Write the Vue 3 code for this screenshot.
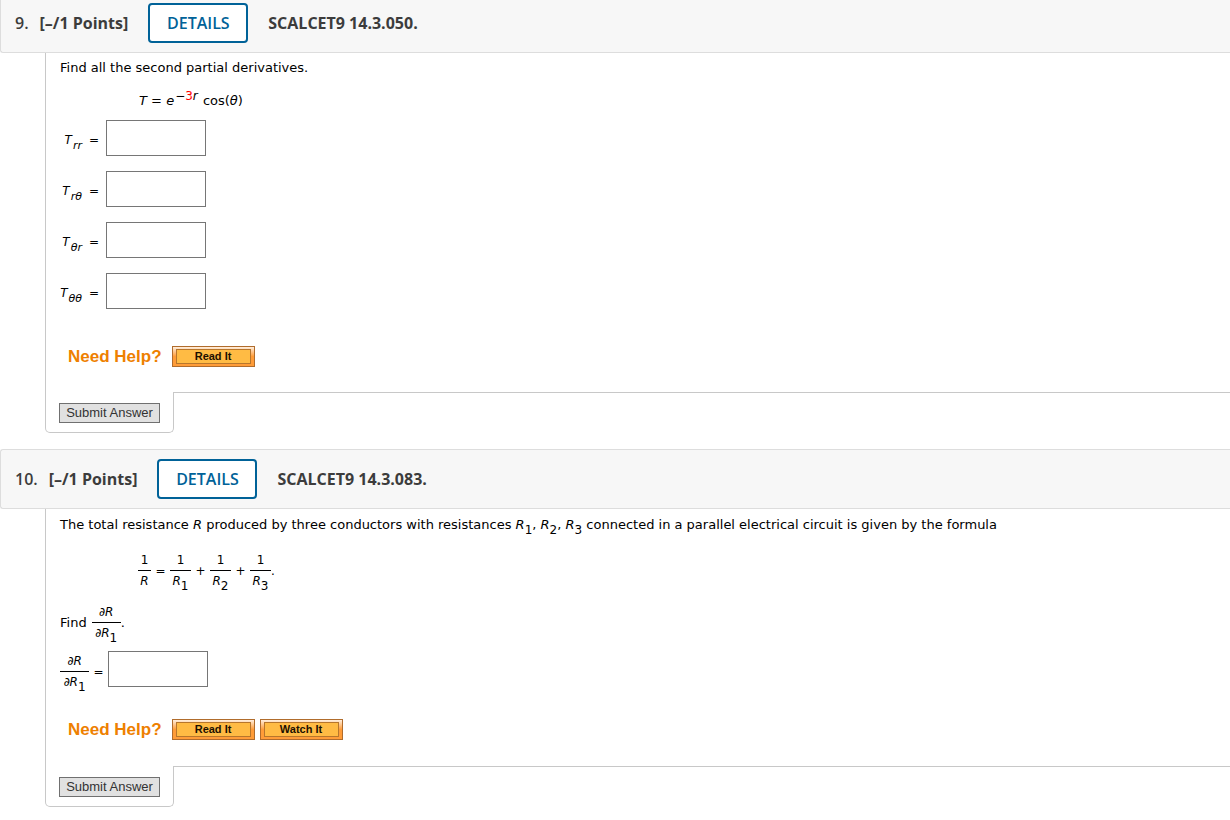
<template>
  <main class="assignment">
    <section v-for="q in questions" :key="q.number" class="question">
      <header class="question-header">
        <span class="number">{{ q.number }}.</span>
        <span class="points">[–/1 Points]</span>
        <button type="button" class="details">DETAILS</button>
        <span class="code">{{ q.code }}</span>
      </header>

      <div class="question-body">
        <div v-if="q.number === 9" class="content">
          <p class="text">Find all the second partial derivatives.</p>
          <p class="text equation">
            <i>T</i> = <i>e</i><sup>−<span class="red">3</span><i>r</i></sup> cos(<i>θ</i>)
          </p>
          <div v-for="sub in partials" :key="sub" class="answer-row">
            <label :for="'t-' + sub"><i>T</i><sub><i>{{ sub }}</i></sub><span class="eq">=</span></label>
            <input :id="'t-' + sub" v-model="answers[sub]" type="text" class="answer" />
          </div>
        </div>

        <div v-else class="content">
          <p class="text">
            The total resistance <i>R</i> produced by three conductors with resistances
            <i>R</i><sub>1</sub>, <i>R</i><sub>2</sub>, <i>R</i><sub>3</sub> connected in a parallel electrical circuit is given by the formula
          </p>
          <div class="formula">
            <span class="frac narrow"><span>1</span><span class="den"><i>R</i></span></span>
            <span class="op">=</span>
            <template v-for="n in 3" :key="n">
              <span v-if="n > 1" class="op">+</span>
              <span class="frac"><span>1</span><span class="den"><i>R</i><sub>{{ n }}</sub></span></span>
            </template>
            <span>.</span>
          </div>
          <div class="find">
            <span class="find-word">Find</span>
            <span class="frac wide"><span>∂<i>R</i></span><span class="den">∂<i>R</i><sub>1</sub></span></span>
            <span>.</span>
          </div>
          <div class="derivative">
            <label for="dr" class="derivative-label">
              <span class="frac wide"><span>∂<i>R</i></span><span class="den">∂<i>R</i><sub>1</sub></span></span>
              <span class="op">=</span>
            </label>
            <input id="dr" v-model="answers.dr" type="text" class="answer" />
          </div>
        </div>

        <div class="help">
          <span class="help-title">Need Help?</span>
          <button v-for="h in q.help" :key="h" type="button" class="help-button"><span>{{ h }}</span></button>
        </div>
      </div>

      <footer class="question-footer">
        <div class="submit-tab">
          <button type="button" class="submit">Submit Answer</button>
        </div>
        <div class="footer-line"></div>
      </footer>
    </section>
  </main>
</template>

<script setup>
import { reactive } from 'vue'

const questions = [
  { number: 9, code: 'SCALCET9 14.3.050.', help: ['Read It'] },
  { number: 10, code: 'SCALCET9 14.3.083.', help: ['Read It', 'Watch It'] }
]

const partials = ['rr', 'rθ', 'θr', 'θθ']

const answers = reactive({ rr: '', rθ: '', θr: '', θθ: '', dr: '' })
</script>

<style>
body {
  margin: 0;
  background: #fff;
}
</style>

<style scoped>
.assignment {
  font-family: Verdana, "DejaVu Sans", sans-serif;
  font-size: 13px;
  line-height: 20px;
  color: #000;
}

.question {
  margin-bottom: 16px;
}

.question-header {
  display: flex;
  align-items: center;
  padding: 9px 14px;
  border: 1px solid #ddd;
  border-right: 0;
  border-radius: 3px 0 0 3px;
  background: #f7f7f7;
  color: #3c3c3c;
  font-family: "Open Sans", sans-serif;
  font-size: 16px;
  font-weight: 700;
}

.question:first-child .question-header {
  border-top: 0;
  padding-top: 3px;
  border-top-left-radius: 0;
}

.number {
  margin-right: 11px;
  font-weight: 600;
}

.details {
  box-sizing: border-box;
  width: 100px;
  height: 40px;
  margin: 0 20px;
  padding: 0;
  border: 2px solid #006298;
  border-radius: 4px;
  background: #fff;
  color: #006298;
  font: 600 16px "Open Sans", sans-serif;
}

.question-body {
  margin-left: 45px;
  padding: 5px 14px 25px;
  border-left: 1px solid #c8c8c8;
}

.question:last-child .question-body {
  padding-top: 6px;
  padding-bottom: 26px;
}

.text {
  margin: 0;
}

sub,
sup {
  font-size: 12px;
  line-height: 0;
}

sub {
  vertical-align: -5px;
}

sup {
  margin: 0 1px;
  vertical-align: 5px;
}

.red {
  color: #f00;
}

.equation {
  margin: 13px 0 9px 79px;
}

.answer-row {
  display: flex;
  align-items: center;
  margin-bottom: 15px;
}

.answer-row label {
  width: 39px;
  margin-right: 7px;
  padding-top: 4px;
  font-size: 12px;
  text-align: right;
  white-space: nowrap;
}

.answer-row sub {
  margin-left: 1px;
  font-size: 11px;
}

.eq {
  margin-left: 7px;
}

.answer {
  box-sizing: border-box;
  width: 100px;
  height: 36px;
  padding: 4px;
  border: 1px solid #767676;
  background: #fff;
  font: inherit;
}

.formula,
.find,
.derivative-label {
  display: flex;
  align-items: center;
}

.formula {
  margin: 15px 0 0 78px;
  font-size: 12px;
}

.frac {
  display: inline-flex;
  flex-direction: column;
  width: 21px;
  font-size: 12px;
  text-align: center;
}

.frac.narrow {
  width: 13px;
}

.frac.wide {
  width: 29px;
}

.den {
  border-top: 1px solid #000;
}

.op {
  width: 19px;
  text-align: center;
  font-size: 12px;
}

.find {
  margin-top: 11px;
}

.find-word {
  margin-right: 5px;
}

.derivative {
  display: flex;
  align-items: flex-start;
  margin: 8px 0 5px;
}

.help {
  display: flex;
  align-items: center;
  gap: 5px;
  padding: 22px 0 0 8px;
}

.help-title {
  margin-right: 5px;
  color: #ee8000;
  font: bold 17px/20px "Liberation Sans", Arial, sans-serif;
}

.help-button {
  box-sizing: border-box;
  width: 83px;
  height: 21px;
  padding: 2px 3px;
  border: 1px solid #b06c2c;
  background: linear-gradient(#ffeedd, #ff9c38 50%);
}

.help-button span {
  display: block;
  box-sizing: border-box;
  height: 15px;
  border: 1px solid #b7762c;
  background: #ffbb44;
  color: #1c1000;
  font: bold 11px/13px "Liberation Sans", Arial, sans-serif;
}

.question-footer {
  display: flex;
  margin-left: 45px;
}

.submit-tab {
  box-sizing: border-box;
  width: 129px;
  height: 41px;
  padding: 11px 13px 9px;
  border: 1px solid #c8c8c8;
  border-top: 0;
  border-radius: 0 0 5px 5px;
}

.submit {
  box-sizing: border-box;
  width: 101px;
  height: 20px;
  padding: 0;
  border: 1px solid #707070;
  background: #e1e1e1;
  color: #333;
  font: 13px/18px "Liberation Sans", Arial, sans-serif;
  white-space: nowrap;
}

.footer-line {
  flex: 1;
  border-top: 1px solid #c8c8c8;
}
</style>
